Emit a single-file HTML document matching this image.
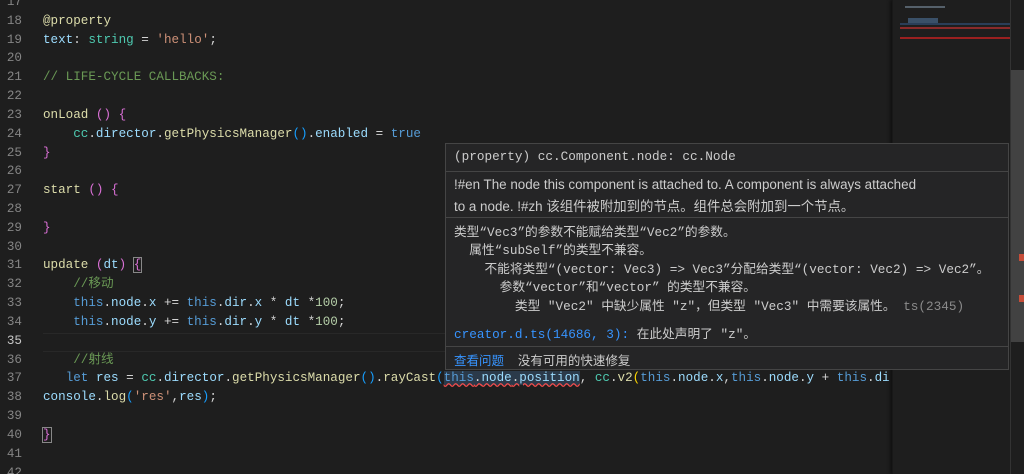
<!DOCTYPE html>
<html style="overflow:hidden;height:474px"><head><meta charset="utf-8"><style>
html,body{margin:0;width:1024px;height:474px;overflow:hidden}
body{background:#1e1e1e;position:relative;font-family:"Liberation Mono","Noto Sans CJK SC",monospace;}
.code{position:absolute;left:0;top:-7px;width:892px;height:481px;overflow:hidden;font-size:12.6px;line-height:18.82px;white-space:pre;color:#d4d4d4}
.ln{position:absolute;left:0;width:22px;text-align:right;color:#858585}
.tx{position:absolute;left:43px}
.k{color:#569cd6}.f{color:#dcdcaa}.v{color:#9cdcfe}.t{color:#4ec9b0}.s{color:#ce9178}.c{color:#6a9955}.n{color:#b5cea8}.p{color:#da70d6}.b{color:#179fff}.y{color:#ffd700}
.tip{position:absolute;left:445px;top:143px;width:562px;height:225px;background:#252526;border:1px solid #454545;font-family:"Liberation Sans","Noto Sans CJK SC",sans-serif;font-size:13.4px;color:#cccccc}
.tip div{position:absolute;left:8px;white-space:pre}
.mono{font-family:"Liberation Mono","Noto Sans CJK SC",monospace;font-size:12.7px}
.hr{position:absolute;left:0!important;width:562px;height:1px;background:#454545}
</style></head><body>
<div style="position:absolute;left:43px;top:333px;width:850px;height:17px;border-top:1px solid #282828;border-bottom:1px solid #282828"></div>
<div class="code">
<div class="ln" style="top:0">17</div>
<div class="ln" style="top:18.82px">18</div><div class="tx f" style="top:18.82px">@property</div>
<div class="ln" style="top:37.64px">19</div><div class="tx" style="top:37.64px"><span class="v">text</span>: <span class="t">string</span> = <span class="s">'hello'</span>;</div>
<div class="ln" style="top:56.46px">20</div>
<div class="ln" style="top:75.28px">21</div><div class="tx c" style="top:75.28px">// LIFE-CYCLE CALLBACKS:</div>
<div class="ln" style="top:94.1px">22</div>
<div class="ln" style="top:112.92px">23</div><div class="tx" style="top:112.92px"><span class="f">onLoad</span> <span class="p">()</span> <span class="p">{</span></div>
<div class="ln" style="top:131.74px">24</div><div class="tx" style="top:131.74px">    <span class="t">cc</span>.<span class="v">director</span>.<span class="f">getPhysicsManager</span><span class="b">()</span>.<span class="v">enabled</span> = <span class="k">true</span></div>
<div class="ln" style="top:150.56px">25</div><div class="tx p" style="top:150.56px">}</div>
<div class="ln" style="top:169.38px">26</div>
<div class="ln" style="top:188.2px">27</div><div class="tx" style="top:188.2px"><span class="f">start</span> <span class="p">()</span> <span class="p">{</span></div>
<div class="ln" style="top:207.02px">28</div>
<div class="ln" style="top:225.84px">29</div><div class="tx p" style="top:225.84px">}</div>
<div class="ln" style="top:244.66px">30</div>
<div class="ln" style="top:263.48px">31</div><div class="tx" style="top:263.48px"><span class="f">update</span> <span class="p">(</span><span class="v">dt</span><span class="p">)</span> <span class="p" style="outline:1px solid #888">{</span></div>
<div class="ln" style="top:282.3px">32</div><div class="tx c" style="top:282.3px">    //移动</div>
<div class="ln" style="top:301.12px">33</div><div class="tx" style="top:301.12px">    <span class="k">this</span>.<span class="v">node</span>.<span class="v">x</span> += <span class="k">this</span>.<span class="v">dir</span>.<span class="v">x</span> * <span class="v">dt</span> *<span class="n">100</span>;</div>
<div class="ln" style="top:319.94px">34</div><div class="tx" style="top:319.94px">    <span class="k">this</span>.<span class="v">node</span>.<span class="v">y</span> += <span class="k">this</span>.<span class="v">dir</span>.<span class="v">y</span> * <span class="v">dt</span> *<span class="n">100</span>;</div>
<div class="ln" style="top:338.76px;color:#c6c6c6">35</div>
<div class="ln" style="top:357.58px">36</div><div class="tx c" style="top:357.58px">    //射线</div>
<div class="ln" style="top:376.4px">37</div><div class="tx" style="top:376.4px">   <span class="k">let</span> <span class="v">res</span> = <span class="t">cc</span>.<span class="v">director</span>.<span class="f">getPhysicsManager</span><span class="b">()</span>.<span class="f">rayCast</span><span class="b">(</span><span style="background:#2b3a4a;text-decoration:underline wavy #f14c4c"><span class="k">this</span>.<span class="v">node</span>.<span class="v">position</span></span>, <span class="t">cc</span>.<span class="f">v2</span><span class="y">(</span><span class="k">this</span>.<span class="v">node</span>.<span class="v">x</span>,<span class="k">this</span>.<span class="v">node</span>.<span class="v">y</span> + <span class="k">this</span>.<span class="v">di</span></div>
<div class="ln" style="top:395.22px">38</div><div class="tx" style="top:395.22px"><span class="v">console</span>.<span class="f">log</span><span class="b">(</span><span class="s">'res'</span>,<span class="v">res</span><span class="b">)</span>;</div>
<div class="ln" style="top:414.04px">39</div>
<div class="ln" style="top:432.86px">40</div><div class="tx p" style="top:432.86px"><span style="outline:1px solid #888">}</span></div>
<div class="ln" style="top:451.68px">41</div>
<div class="ln" style="top:470.5px">42</div>
</div>
<div style="position:absolute;left:892px;top:0;width:118px;height:474px;background:#1e1e1e;border-left:1px solid #181818;box-shadow:-2px 0 3px #111"></div>
<div style="position:absolute;left:905px;top:6px;width:40px;height:2px;background:#55606a"></div>
<div style="position:absolute;left:908px;top:18px;width:30px;height:5px;background:#3a5068"></div>
<div style="position:absolute;left:900px;top:23px;width:110px;height:2px;background:#2a3e58"></div>
<div style="position:absolute;left:900px;top:27px;width:110px;height:2px;background:#8a2a2a"></div>
<div style="position:absolute;left:900px;top:37px;width:110px;height:2px;background:#9a2020"></div>
<div style="position:absolute;left:1010px;top:0;width:14px;height:474px;background:#1e1e1e;border-left:1px solid #333"></div>
<div style="position:absolute;left:1011px;top:70px;width:13px;height:272px;background:#424242"></div>
<div style="position:absolute;left:1019px;top:254px;width:5px;height:7px;background:#c74e39"></div>
<div style="position:absolute;left:1019px;top:295px;width:5px;height:7px;background:#c74e39"></div>
<div class="tip">
<div class="mono" style="top:5px">(property) cc.Component.node: cc.Node</div>
<div class="hr" style="top:27px"></div>
<div style="top:33px">!#en The node this component is attached to. A component is always attached</div>
<div style="top:51px">to a node. !#zh 该组件被附加到的节点。组件总会附加到一个节点。</div>
<div class="hr" style="top:73px"></div>
<div class="mono" style="top:77px">类型“Vec3”的参数不能赋给类型“Vec2”的参数。</div>
<div class="mono" style="top:95px">  属性“subSelf”的类型不兼容。</div>
<div class="mono" style="top:114px">    不能将类型“(vector: Vec3) => Vec3”分配给类型“(vector: Vec2) => Vec2”。</div>
<div class="mono" style="top:132px">      参数“vector”和“vector” 的类型不兼容。</div>
<div class="mono" style="top:151px">        类型 "Vec2" 中缺少属性 "z"，但类型 "Vec3" 中需要该属性。 <span style="color:#8b8b8b">ts(2345)</span></div>
<div class="mono" style="top:179px"><span style="color:#3794ff">creator.d.ts(14686, 3):</span> 在此处声明了 "z"。</div>
<div class="hr" style="top:202px"></div>
<div style="top:206px;font-size:12.5px"><span style="color:#3794ff">查看问题</span>    没有可用的快速修复</div>
</div>
</body></html>
